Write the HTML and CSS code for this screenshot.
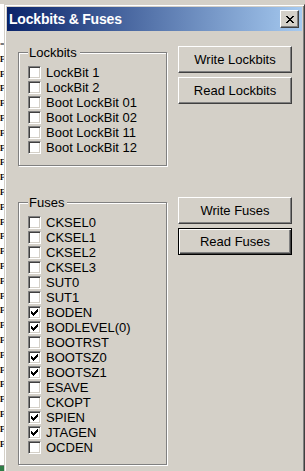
FILE: index.html
```html
<!DOCTYPE html>
<html lang="en">

<head>
    <meta charset="UTF-8">
    <title>Lockbits &amp; Fuses</title>
    <link rel="stylesheet" href="styles.css">
</head>

<body>
    <!-- fenetre du programme derriere le dialogue -->
    <div class="desktop">
        <div class="bg-top"></div>
        <div class="bg-main">
            <div class="bg-list">
                <span>=</span><span>F</span><span>F</span><span>F</span><span>F</span><span>F</span><span>F</span>
                <span>F</span><span>F</span><span>F</span><span>F</span><span>F</span><span>F</span><span>F</span>
                <span>F</span><span>F</span><span>F</span><span>F</span><span>F</span><span>F</span><span>F</span>
                <span>F</span><span>F</span><span>F</span><span>F</span><span>F</span><span>F</span><span>F</span>
            </div>
        </div>
        <div class="bg-foot"></div>
    </div>

    <div class="dialog">
        <div class="titlebar">
            <span class="title">Lockbits &amp; Fuses</span>
            <button class="close" type="button">
                <svg width="8" height="7" viewBox="0 0 8 7" shape-rendering="crispEdges">
                    <path d="M0 0h2v1h1v1h2V1h1V0h2v1H7v1H6v1H5v1h1v1h1v1h1v1H6V6H5V5H3v1H2v1H0V6h1V5h1V4h1V3H2V2H1V1H0z" fill="#000" />
                </svg>
            </button>
        </div>

        <div class="dlg-body">
            <fieldset class="group">
                <legend>Lockbits</legend>
                <label class="chk"><span class="box"></span>LockBit 1</label>
                <label class="chk"><span class="box"></span>LockBit 2</label>
                <label class="chk"><span class="box"></span>Boot LockBit 01</label>
                <label class="chk"><span class="box"></span>Boot LockBit 02</label>
                <label class="chk"><span class="box"></span>Boot LockBit 11</label>
                <label class="chk"><span class="box"></span>Boot LockBit 12</label>
            </fieldset>

            <div class="btns">
                <button class="btn" type="button">Write Lockbits</button>
                <button class="btn" type="button">Read Lockbits</button>
            </div>

            <fieldset class="group fuses">
                <legend>Fuses</legend>
                <label class="chk"><span class="box"></span>CKSEL0</label>
                <label class="chk"><span class="box"></span>CKSEL1</label>
                <label class="chk"><span class="box"></span>CKSEL2</label>
                <label class="chk"><span class="box"></span>CKSEL3</label>
                <label class="chk"><span class="box"></span>SUT0</label>
                <label class="chk"><span class="box"></span>SUT1</label>
                <label class="chk"><span class="box on"><svg viewBox="0 0 7 7" width="7" height="7" shape-rendering="crispEdges"><path d="M0 2h1v3H0zM1 3h1v3H1zM2 4h1v3H2zM3 3h1v3H3zM4 2h1v3H4zM5 1h1v3H5zM6 0h1v3H6z" /></svg></span>BODEN</label>
                <label class="chk"><span class="box on"><svg viewBox="0 0 7 7" width="7" height="7" shape-rendering="crispEdges"><path d="M0 2h1v3H0zM1 3h1v3H1zM2 4h1v3H2zM3 3h1v3H3zM4 2h1v3H4zM5 1h1v3H5zM6 0h1v3H6z" /></svg></span>BODLEVEL(0)</label>
                <label class="chk"><span class="box"></span>BOOTRST</label>
                <label class="chk"><span class="box on"><svg viewBox="0 0 7 7" width="7" height="7" shape-rendering="crispEdges"><path d="M0 2h1v3H0zM1 3h1v3H1zM2 4h1v3H2zM3 3h1v3H3zM4 2h1v3H4zM5 1h1v3H5zM6 0h1v3H6z" /></svg></span>BOOTSZ0</label>
                <label class="chk"><span class="box on"><svg viewBox="0 0 7 7" width="7" height="7" shape-rendering="crispEdges"><path d="M0 2h1v3H0zM1 3h1v3H1zM2 4h1v3H2zM3 3h1v3H3zM4 2h1v3H4zM5 1h1v3H5zM6 0h1v3H6z" /></svg></span>BOOTSZ1</label>
                <label class="chk"><span class="box"></span>ESAVE</label>
                <label class="chk"><span class="box"></span>CKOPT</label>
                <label class="chk"><span class="box on"><svg viewBox="0 0 7 7" width="7" height="7" shape-rendering="crispEdges"><path d="M0 2h1v3H0zM1 3h1v3H1zM2 4h1v3H2zM3 3h1v3H3zM4 2h1v3H4zM5 1h1v3H5zM6 0h1v3H6z" /></svg></span>SPIEN</label>
                <label class="chk"><span class="box on"><svg viewBox="0 0 7 7" width="7" height="7" shape-rendering="crispEdges"><path d="M0 2h1v3H0zM1 3h1v3H1zM2 4h1v3H2zM3 3h1v3H3zM4 2h1v3H4zM5 1h1v3H5zM6 0h1v3H6z" /></svg></span>JTAGEN</label>
                <label class="chk"><span class="box"></span>OCDEN</label>
            </fieldset>

            <div class="btns fuses-btns">
                <button class="btn" type="button">Write Fuses</button>
                <button class="btn default" type="button">Read Fuses</button>
            </div>
        </div>
    </div>
</body>

</html>
```

FILE: styles.css
```css
* {
    box-sizing: border-box;
    margin: 0;
    padding: 0;
}

body {
    width: 305px;
    height: 471px;
    overflow: hidden;
    position: relative;
    background-color: #d4d0c8;
    font-family: 'Liberation Sans', Arial, sans-serif;
    font-size: 13px;
    color: #000;
}

/* fenetre en arriere plan */
.desktop {
    height: 471px;
    display: flex;
    flex-direction: column;
}

.bg-top {
    height: 4px;
    background-color: #d4d0c8;
}

.bg-main {
    flex: 1;
    display: flex;
}

.bg-list {
    width: 5px;
    background-color: #fff;
    padding-top: 34px;
    display: flex;
    flex-direction: column;
}

.bg-list span {
    height: 14.8px;
    line-height: 14.8px;
    font-family: 'Liberation Serif', serif;
    font-weight: bold;
    font-size: 8px;
}

.bg-foot {
    height: 6px;
    border-top: 1px solid #808080;
    background-color: #2f7d46;
}

/* dialogue */
.dialog {
    position: absolute;
    left: 4px;
    top: 4px;
    right: 0;
    height: 490px;
    padding: 2px;
    background-color: #d4d0c8;
    border: 1px solid;
    border-color: #d4d0c8 #404040 #404040 #d4d0c8;
    box-shadow: inset 1px 1px 0 #fff, inset -1px -1px 0 #808080;
}

.titlebar {
    height: 24px;
    display: flex;
    align-items: center;
    justify-content: space-between;
    padding: 0 3px 0 2px;
    background: linear-gradient(to right, #0a246a, #a6caf0);
}

.title {
    color: #fff;
    font-weight: bold;
    font-size: 14px;
    letter-spacing: -0.2px;
}

.close {
    width: 19px;
    height: 18px;
    display: flex;
    align-items: center;
    justify-content: center;
    background-color: #d4d0c8;
    border: 1px solid;
    border-color: #fff #404040 #404040 #fff;
    box-shadow: inset -1px -1px 0 #808080;
}

.dlg-body {
    display: grid;
    grid-template-columns: 149px 114px;
    column-gap: 11px;
    row-gap: 29px;
    align-items: start;
    padding: 14px 0 0 11px;
}

/* group box */
.group {
    border: 1px solid #808080;
    box-shadow: inset 1px 1px 0 #fff, 1px 1px 0 #fff;
    padding: 5px 0 10px 9px;
    min-width: 0;
}

.group legend {
    line-height: 15px;
    padding: 0 3px 0 1px;
    background-color: #d4d0c8;
}

.fuses {
    padding-bottom: 9px;
}

.chk {
    height: 15px;
    display: flex;
    align-items: center;
    gap: 5px;
    line-height: 15px;
    white-space: nowrap;
}

.box {
    width: 13px;
    height: 13px;
    flex-shrink: 0;
    display: flex;
    align-items: center;
    justify-content: center;
    background-color: #fff;
    border: 1px solid;
    border-color: #808080 #fff #fff #808080;
    box-shadow: inset 1px 1px 0 #404040, inset -1px -1px 0 #d4d0c8;
}

.box svg {
    fill: #000;
}

/* boutons */
.btns {
    display: flex;
    flex-direction: column;
    gap: 4px;
    margin-top: 1px;
}

.fuses-btns {
    margin-top: 2px;
}

.btn {
    height: 27px;
    font-family: inherit;
    font-size: 13px;
    color: #000;
    background-color: #d4d0c8;
    border: 1px solid;
    border-color: #fff #404040 #404040 #fff;
    box-shadow: inset -1px -1px 0 #808080;
}

.btn.default {
    border: 1px solid #000;
    box-shadow: inset 1px 1px 0 #fff, inset -1px -1px 0 #404040, inset -2px -2px 0 #808080;
}
```
